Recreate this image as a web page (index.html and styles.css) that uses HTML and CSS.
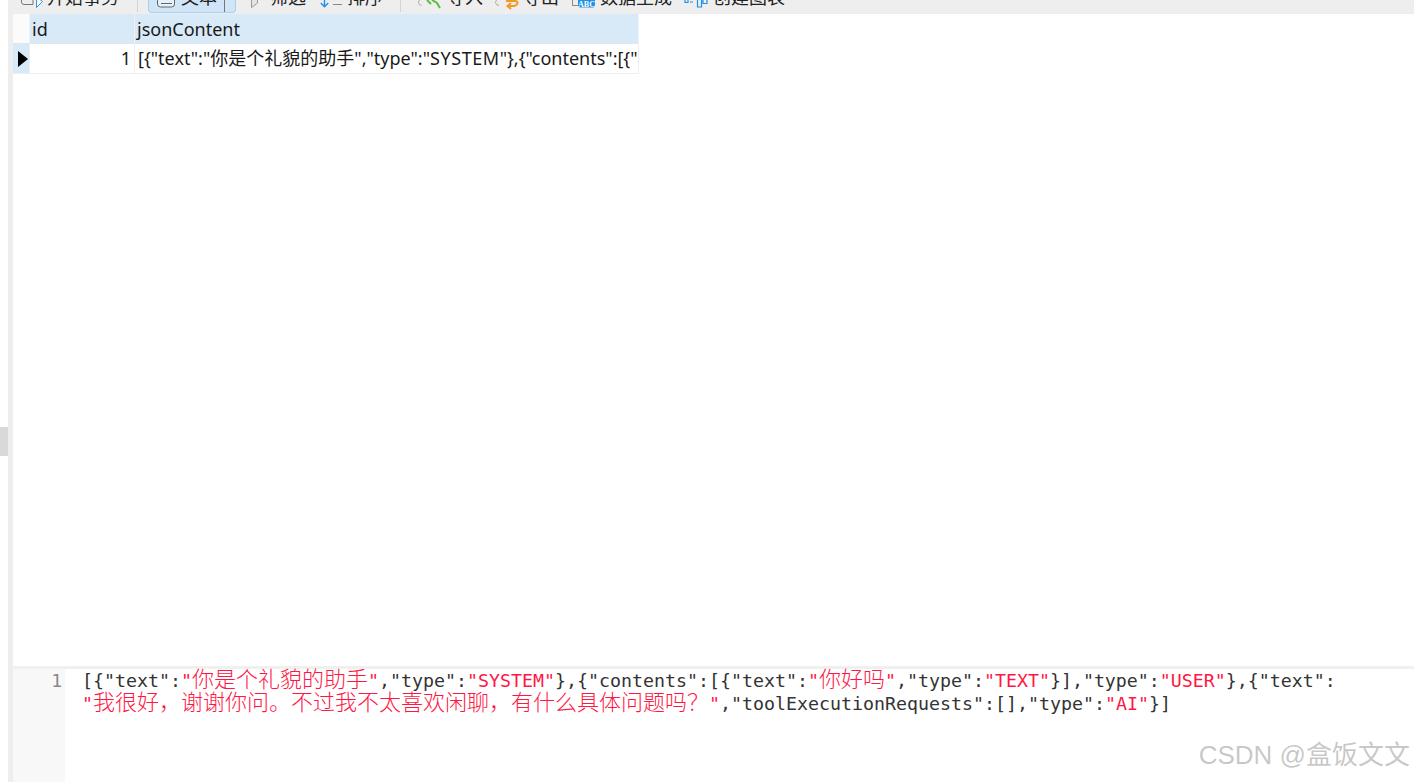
FILE: index.html
```html
<!DOCTYPE html>
<html lang="zh">
<head>
<meta charset="utf-8">
<title>jsonContent</title>
<link rel="stylesheet" href="styles.css">
</head>
<body>
<div class="shell">
  <div class="gutter"><div class="handle"></div></div>
  <div class="main">
    <div class="toolbar">
      <div class="tool t-begin"><svg class="ic" width="22" height="14" viewBox="0 0 22 14"><path d="M3 -3H12V4.500H3Q.5 4.500 .5 2V-1" fill="none" stroke="#777"/><path d="M15.500 -3V7.500L21.500 1.500z" fill="#fff" stroke="#2f93e6"/></svg><span>开始事务</span></div>
      <div class="sep"></div>
      <div class="tool active"><svg class="ic" width="20" height="14" viewBox="0 0 20 14"><rect x="1.500" y="-6" width="17" height="13" rx="3" fill="#e6f1fb" stroke="#666"/><path d="M5 3.500h11" stroke="#666"/></svg><span>文本</span><i class="caret"></i></div>
      <div class="tool t-filter"><svg class="ic" width="16" height="14" viewBox="0 0 16 14"><path d="M1.500 -2V7.500L7.500 3V-2" fill="#e4e4e4" stroke="#999"/></svg><span>筛选</span></div>
      <div class="tool t-sort"><svg class="ic" width="24" height="14" viewBox="0 0 24 14"><path d="M4.500 -2V6.500M.8 3l3.700 3.700L8.200 3" fill="none" stroke="#1e90e8" stroke-width="1.400"/><path d="M13 4.500h9" stroke="#888"/></svg><span>排序</span></div>
      <div class="sep"></div>
      <div class="tool t-import"><svg class="ic" width="24" height="14" viewBox="0 0 24 14"><path d="M3.500 -2Q.5 0 .5 2.500T3.500 5.500" fill="none" stroke="#aaa"/><path d="M9 0L13 4M14 0L19 3L22 8" fill="none" stroke="#5dbb3f" stroke-width="2"/></svg><span>导入</span></div>
      <div class="tool t-export"><svg class="ic" width="24" height="14" viewBox="0 0 24 14"><path d="M4 -2Q.5 0 .5 2.500T4 5.500" fill="none" stroke="#aaa"/><path d="M11 1H20Q22.500 1 22.500 3T19 6H13M16 3L12.500 6L16 9" fill="none" stroke="#f39a26" stroke-width="2"/></svg><span>导出</span></div>
      <div class="tool t-gen"><svg class="ic" width="25" height="14" viewBox="0 0 25 14"><path d="M1.500 -2V5.500H9" fill="none" stroke="#888"/><rect x="7" y="-7" width="17" height="14.500" rx="2" fill="#1e90e8"/><text x="15.500" y="6.500" class="abc">ABC</text></svg><span>数据生成</span></div>
      <div class="tool t-chart"><svg class="ic" width="25" height="14" viewBox="0 0 25 14"><path d="M1 -1V2.500H4V-1M6 2H9M13.500 -1V7H17.500V-1M19 -1V3.500H23V-1" fill="none" stroke="#1e90e8" stroke-width="1.200"/></svg><span>创建图表</span></div>
    </div>
    <div class="grid-area">
      <table class="grid">
        <thead>
          <tr><th class="ind"></th><th class="col-id">id</th><th class="col-json">jsonContent</th></tr>
        </thead>
        <tbody>
          <tr>
            <td class="ind"><span class="arrow"></span></td>
            <td class="num">1</td>
            <td class="json"><div class="clip">[{"text":"你是个礼貌的助手","type":"<span class="wide">SYSTEM</span>"},{"contents":[{"</div></td>
          </tr>
        </tbody>
      </table>
    </div>
    <div class="editor">
      <div class="lines">1</div>
      <div class="code"><div class="row">[{"text":<b>"<i>你是个礼貌的助手</i>"</b>,"type":<b>"SYSTEM"</b>},{"contents":[{"text":<b>"<i>你好吗</i>"</b>,"type":<b>"TEXT"</b>}],"type":<b>"USER"</b>},{"text":</div><div class="row"><b>"<i>我很好，谢谢你问。不过我不太喜欢闲聊，有什么具体问题吗？</i>"</b>,"toolExecutionRequests":[],"type":<b>"AI"</b>}]</div></div>
    </div>
  </div>
</div>
<div class="mark">CSDN @盒饭文文</div>
</body>
</html>
```
FILE: styles.css
```css
html, body { margin: 0; padding: 0; height: 100%; overflow: hidden; background: #fff; }
.shell { display: flex; height: 782px; font-family: "Noto Sans", "Noto Sans CJK SC", sans-serif; }
.gutter { width: 13px; flex: none; box-sizing: border-box; border-right: 5px solid #eeeeee; padding-top: 427px; }
.handle { width: 8px; height: 29px; background: #d9d9d9; }
.main { flex: 1; min-width: 0; display: flex; flex-direction: column; }
.toolbar { height: 14px; flex: none; margin-left: -5px; background: #eeeeee; display: flex; align-items: flex-start; overflow: hidden; font: 18px "Noto Sans CJK SC", sans-serif; color: #222; }
.tool { display: flex; align-items: flex-start; height: 14px; flex: none; }
.tool span { margin-top: -14px; line-height: 20px; flex: none; }
.ic { display: block; flex: none; }
.abc { font: 700 8px "Liberation Serif", serif; fill: #fff; text-anchor: middle; }
.sep { width: 1px; height: 12px; background: #d4d4d4; flex: none; }
.t-begin { margin-left: 13px; gap: 4px; margin-right: 18px; }
.active { margin-left: 10px; width: 88px; height: 13px; box-sizing: border-box; padding-left: 7px; gap: 5px; background: #d0e6f8; border: 1px solid #a8d0f0; border-top: 0; border-radius: 0 0 4px 4px; position: relative; }
.caret { position: absolute; right: 10px; top: 0; width: 1px; height: 12px; background: #777; }
.t-filter { margin-left: 14px; gap: 4px; }
.t-sort { margin-left: 14px; gap: 3px; margin-right: 17px; }
.t-import { margin-left: 17px; gap: 5px; }
.t-export { margin-left: 12px; gap: 4px; }
.t-gen { margin-left: 12px; gap: 4px; }
.t-chart { margin-left: 12px; gap: 4px; }
.grid-area { flex: 1; min-height: 0; }
.grid { border-collapse: separate; border-spacing: 0; table-layout: fixed; width: 626px; font: 18px/28px "Noto Sans", "Noto Sans CJK SC", sans-serif; color: #1a1a1a; }
.grid th { height: 30px; padding: 0 0 0 2px; background: #d8e9f8; font-weight: 400; text-align: left; border-right: 1px solid #eef2f6; border-bottom: 1px solid #e2e6ea; box-sizing: border-box; }
.grid td { height: 30px; padding: 0 0 1px 2px; box-sizing: border-box; border-right: 1px solid #eeeeee; border-bottom: 1px solid #eeeeee; }
.grid .ind { width: 17px; padding: 0; }
.grid th.ind { background: #fbfbfb; }
.grid td.ind { background: #d8e9f8; }
.col-id { width: 105px; }
.grid td.num { text-align: right; padding-right: 3px; }
.grid td.json { padding-left: 3px; }
.clip { overflow: hidden; white-space: nowrap; }
.wide { letter-spacing: .55px; }
.arrow { display: block; width: 0; height: 0; margin-left: 5px; border-left: 10px solid #000; border-top: 8px solid transparent; border-bottom: 8px solid transparent; }
.editor { height: 113px; flex: none; border-top: 3px solid #f0f0f0; display: flex; }
.lines { width: 52px; flex: none; background: #f8f8f8; color: #888; font: 18px/23px "DejaVu Sans Mono", monospace; box-sizing: border-box; padding-right: 3px; text-align: right; }
.code { padding: 0 0 0 17px; font: 18.270px/23px "DejaVu Sans Mono", "Noto Sans CJK SC", monospace; color: #333; white-space: nowrap; }
.row { height: 23px; }
.code b { font-weight: 400; color: #ff1744; }
.code i { font: 300 22px/0 "Noto Sans CJK SC", sans-serif; }
.mark { position: absolute; right: 4px; bottom: 10px; font: 26px/34px "Liberation Sans", "Noto Sans CJK SC", sans-serif; color: rgba(120,120,120,.42); }
```
